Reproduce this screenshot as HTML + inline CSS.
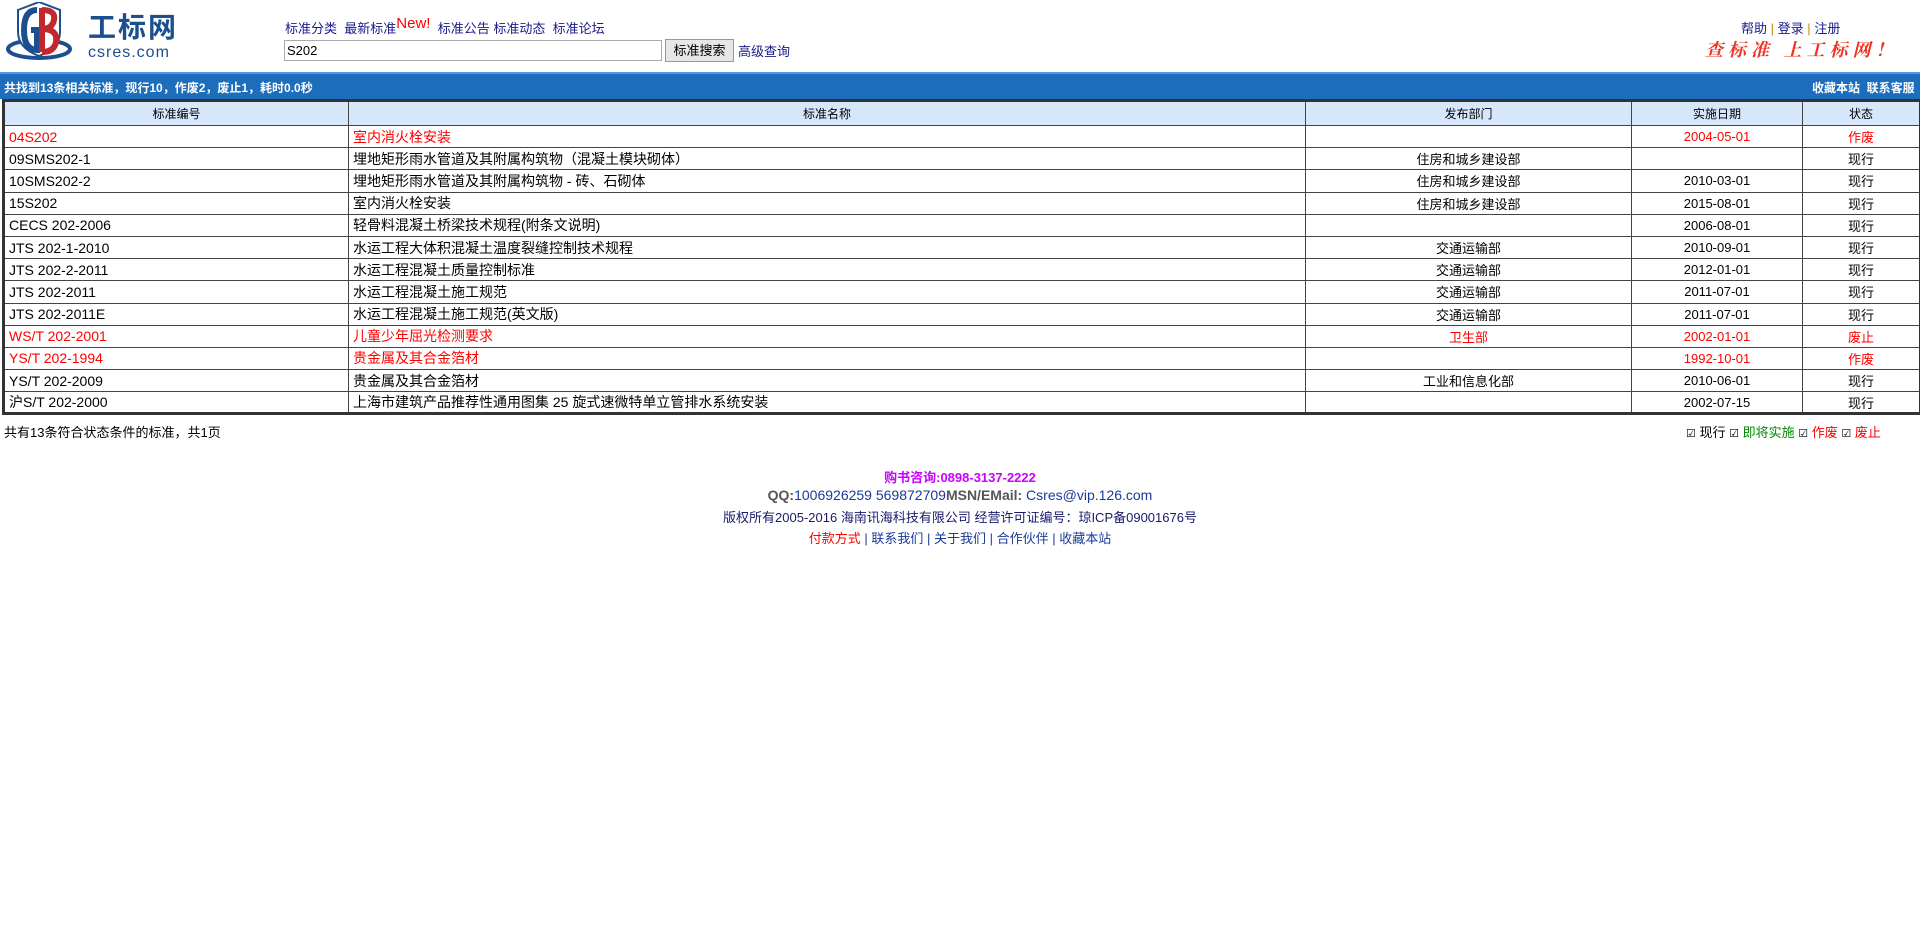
<!DOCTYPE html>
<html><head><meta charset="utf-8">
<style>
*{margin:0;padding:0;box-sizing:border-box}
body{width:1920px;height:947px;background:#fff;font-family:"Liberation Sans","Noto Sans CJK SC",sans-serif;font-size:13px;color:#000;position:relative;overflow:hidden}
.abs{position:absolute;white-space:nowrap}
a{color:#1a1a8a;text-decoration:none}
.bar{position:absolute;left:0;top:72px;width:1920px;height:27px;background:#1c6dbb;border-top:2px solid #4e9ae0;color:#fff;font-size:12px;font-weight:bold}
table{position:absolute;left:2px;top:99px;width:1917px;border-collapse:collapse;border:3px solid #333;table-layout:fixed}
td{border:1px solid #444;height:22.2px;font-size:14px;padding:0 4px;white-space:nowrap;overflow:hidden}
tr.h td{background:#d6e6fb;text-align:center;font-size:12px;height:25px}
td.c{text-align:center;font-size:13px}
tr.r td{color:#f00}
</style></head><body>
<svg class="abs" style="left:4px;top:2px" width="70" height="60" viewBox="0 0 70 60">
<ellipse cx="35" cy="47" rx="31" ry="9" fill="none" stroke="#1c4f8e" stroke-width="4"/>
<path d="M14 8 L35 0 L56 8 L56 30 Q56 46 35 54 Q14 46 14 30Z" fill="#fff" stroke="#1c4f8e" stroke-width="2"/>
<path d="M33 8 Q20 8 20 28 Q20 48 33 48 L33 28 L27 28" fill="none" stroke="#1c4f8e" stroke-width="6"/>
<path d="M38 6 L38 50 M38 8 Q52 8 50 18 Q48 27 38 27 Q54 27 52 40 Q50 50 38 50" fill="none" stroke="#c0282d" stroke-width="6"/>
</svg>
<div class="abs" style="left:88px;top:12px;font-size:28px;line-height:32px;color:#1c4f8e;font-weight:bold;letter-spacing:2px">工标网</div>
<div class="abs" style="left:88px;top:44px;font-size:16px;line-height:18px;color:#1c4f8e;letter-spacing:1px">csres.com</div>

<div class="abs" style="left:285px;top:18px;font-size:13px"><a>标准分类</a>&nbsp; <a>最新标准</a><span style="color:#f00;font-size:15px;position:relative;top:-5px">New!</span>&nbsp; <a>标准公告</a> <a>标准动态</a>&nbsp; <a>标准论坛</a></div>
<div class="abs" style="left:284px;top:40px;width:378px;height:21px;border:1px solid #aaa;font-size:13px;padding:2px 2px">S202</div>
<div class="abs" style="left:665px;top:39px;width:69px;height:23px;border:1px solid #999;background:#e6e6e6;font-size:13px;text-align:center;line-height:21px">标准搜索</div>
<div class="abs" style="left:738px;top:41px;font-size:13px"><a>高级查询</a></div>

<div class="abs" style="left:1741px;top:18px;font-size:13px"><a>帮助</a> <span style="color:#c80">|</span> <a>登录</a> <span style="color:#c80">|</span> <a>注册</a></div>
<div class="abs" style="left:1705px;top:36px;font-size:18px;color:#e32;font-family:'Liberation Serif','Noto Serif CJK SC',serif;font-style:italic;font-weight:bold;letter-spacing:5px">查标准 上工标网！</div>

<div class="bar"><span class="abs" style="left:4px;top:5px">共找到13条相关标准，现行10，作废2，废止1，耗时0.0秒</span><span class="abs" style="left:1812px;top:5px">收藏本站&nbsp; 联系客服</span></div>

<table>
<colgroup><col style="width:345px"><col style="width:957px"><col style="width:326px"><col style="width:171px"><col style="width:118px"></colgroup>
<tr class="h"><td>标准编号</td><td>标准名称</td><td>发布部门</td><td>实施日期</td><td>状态</td></tr>
<tr class="r"><td>04S202</td><td>室内消火栓安装</td><td class="c"></td><td class="c">2004-05-01</td><td class="c">作废</td></tr>
<tr><td>09SMS202-1</td><td>埋地矩形雨水管道及其附属构筑物（混凝土模块砌体）</td><td class="c">住房和城乡建设部</td><td class="c"></td><td class="c">现行</td></tr>
<tr><td>10SMS202-2</td><td>埋地矩形雨水管道及其附属构筑物 - 砖、石砌体</td><td class="c">住房和城乡建设部</td><td class="c">2010-03-01</td><td class="c">现行</td></tr>
<tr><td>15S202</td><td>室内消火栓安装</td><td class="c">住房和城乡建设部</td><td class="c">2015-08-01</td><td class="c">现行</td></tr>
<tr><td>CECS 202-2006</td><td>轻骨料混凝土桥梁技术规程(附条文说明)</td><td class="c"></td><td class="c">2006-08-01</td><td class="c">现行</td></tr>
<tr><td>JTS 202-1-2010</td><td>水运工程大体积混凝土温度裂缝控制技术规程</td><td class="c">交通运输部</td><td class="c">2010-09-01</td><td class="c">现行</td></tr>
<tr><td>JTS 202-2-2011</td><td>水运工程混凝土质量控制标准</td><td class="c">交通运输部</td><td class="c">2012-01-01</td><td class="c">现行</td></tr>
<tr><td>JTS 202-2011</td><td>水运工程混凝土施工规范</td><td class="c">交通运输部</td><td class="c">2011-07-01</td><td class="c">现行</td></tr>
<tr><td>JTS 202-2011E</td><td>水运工程混凝土施工规范(英文版)</td><td class="c">交通运输部</td><td class="c">2011-07-01</td><td class="c">现行</td></tr>
<tr class="r"><td>WS/T 202-2001</td><td>儿童少年屈光检测要求</td><td class="c">卫生部</td><td class="c">2002-01-01</td><td class="c">废止</td></tr>
<tr class="r"><td>YS/T 202-1994</td><td>贵金属及其合金箔材</td><td class="c"></td><td class="c">1992-10-01</td><td class="c">作废</td></tr>
<tr><td>YS/T 202-2009</td><td>贵金属及其合金箔材</td><td class="c">工业和信息化部</td><td class="c">2010-06-01</td><td class="c">现行</td></tr>
<tr><td>沪S/T 202-2000</td><td>上海市建筑产品推荐性通用图集 25 旋式速微特单立管排水系统安装</td><td class="c"></td><td class="c">2002-07-15</td><td class="c">现行</td></tr>
</table>

<div class="abs" style="left:4px;top:422px;font-size:13px">共有13条符合状态条件的标准，共1页</div>
<div class="abs" style="left:1686px;top:422px;font-size:13px"><span style="font-size:11px">☑</span> 现行 <span style="font-size:11px">☑</span> <span style="color:#080">即将实施</span> <span style="font-size:11px">☑</span> <span style="color:#f00">作废</span> <span style="font-size:11px">☑</span> <span style="color:#f00">废止</span></div>

<div class="abs" style="left:0;width:1920px;text-align:center;top:467px;font-size:13px;color:#c0f;font-weight:bold">购书咨询:0898-3137-2222</div>
<div class="abs" style="left:0;width:1920px;text-align:center;top:487px;font-size:14px;color:#1a3a9a"><b style="color:#555">QQ:</b>1006926259 569872709<b style="color:#555">MSN/EMail:</b> Csres@vip.126.com</div>
<div class="abs" style="left:0;width:1920px;text-align:center;top:507px;font-size:13px;color:#1a1a6a">版权所有2005-2016 海南讯海科技有限公司 经营许可证编号：琼ICP备09001676号</div>
<div class="abs" style="left:0;width:1920px;text-align:center;top:528px;font-size:13px;color:#1a3a9a"><span style="color:#f00">付款方式</span> | 联系我们 | 关于我们 | 合作伙伴 | 收藏本站</div>
</body></html>
